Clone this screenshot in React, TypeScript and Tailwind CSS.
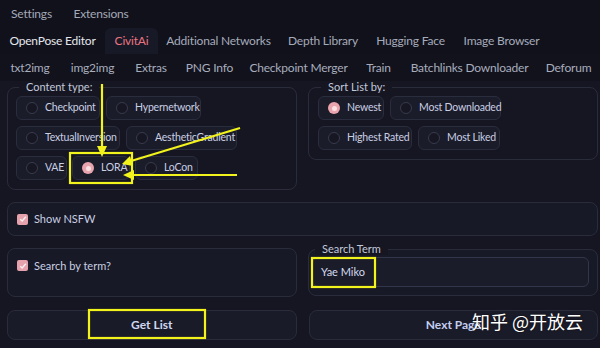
import React from "react";

const topTabs = [
  { label: "Settings", w: "w-[63px]" },
  { label: "Extensions", w: "w-[76px]" },
];

const extTabs = [
  { label: "OpenPose Editor", w: "w-[105px]", cls: "text-[#e4e6ee]" },
  { label: "CivitAi", w: "w-[53px]", cls: "text-[#ea7482] bg-[#181926] rounded-t-md" },
  { label: "Additional Networks", w: "w-[121px]", cls: "text-[#a6abba]" },
  { label: "Depth Library", w: "w-[88px]", cls: "text-[#a6abba]" },
  { label: "Hugging Face", w: "w-[87px]", cls: "text-[#a6abba]" },
  { label: "Image Browser", w: "w-[95px]", cls: "text-[#a6abba]" },
];

const mainTabs = [
  { label: "txt2img", w: "w-[60px]" },
  { label: "img2img", w: "w-[65px]" },
  { label: "Extras", w: "w-[52px]" },
  { label: "PNG Info", w: "w-[65px]" },
  { label: "Checkpoint Merger", w: "w-[113px]" },
  { label: "Train", w: "w-[47px]" },
  { label: "Batchlinks Downloader", w: "w-[135px]" },
  { label: "Deforum", w: "w-[63px]" },
];

const Radio = ({ label, w, on }: { label: string; w: string; on?: boolean }) => (
  <div
    className={`${w} h-[24px] shrink-0 flex items-center gap-[7px] pl-[9px] rounded-md border border-[#2a2d3d] bg-[#1b1c2a] text-[10.5px] tracking-[-0.2px] whitespace-nowrap text-[#c9cfe3]`}
  >
    {on ? (
      <span className="w-[12px] h-[12px] shrink-0 rounded-full bg-[#eaa4ae] flex items-center justify-center">
        <span className="w-[5px] h-[5px] rounded-full bg-[#f9e1e4]" />
      </span>
    ) : (
      <span className="w-[12px] h-[12px] shrink-0 rounded-full border border-[#383b4d] bg-[#161722]" />
    )}
    <span>{label}</span>
  </div>
);

const Check = () => (
  <span className="w-[11px] h-[11px] shrink-0 rounded-[2px] bg-[#e6a2ac] flex items-center justify-center">
    <svg width="8" height="8" viewBox="0 0 8 8">
      <path d="M1.2 4.2 L3.2 6 L6.8 1.8" stroke="#fbeff1" strokeWidth="1.4" fill="none" />
    </svg>
  </span>
);

export default function App() {
  return (
    <div
      className="relative w-[600px] h-[348px] overflow-hidden bg-[#10111a]"
      style={{ fontFamily: "Lato, 'Noto Sans', sans-serif" }}
    >
      {/* tab rows */}
      <div className="flex h-[27px] items-center text-[12px] tracking-[-0.2px] whitespace-nowrap text-[#a4a9b8]">
        {topTabs.map((t) => (
          <div key={t.label} className={`${t.w} shrink-0 flex justify-center`}>
            {t.label}
          </div>
        ))}
      </div>
      <div className="flex h-[27px] items-end text-[12px] tracking-[-0.2px] whitespace-nowrap">
        {extTabs.map((t) => (
          <div key={t.label} className={`${t.w} shrink-0 h-[26px] flex items-center justify-center ${t.cls}`}>
            {t.label}
          </div>
        ))}
      </div>
      <div className="flex h-[27px] items-center text-[12px] tracking-[-0.2px] whitespace-nowrap text-[#a8adbc] bg-[#11121c]">
        {mainTabs.map((t) => (
          <div key={t.label} className={`${t.w} shrink-0 flex justify-center`}>
            {t.label}
          </div>
        ))}
      </div>

      {/* main panel */}
      <div className="bg-[#151622] pl-[7px] pr-[2px] h-[267px]">
        <div className="grid grid-cols-2 gap-[11px] items-start">
          <fieldset className="border border-[#2a2c3b] rounded-lg px-[8px] pb-[9px] pt-[2px]">
            <legend className="ml-[3px] px-[7px] text-[11px] leading-[12px] text-[#c3c8da]">Content type:</legend>
            <div className="flex flex-col gap-[6px] pt-[1px]">
              <div className="flex gap-[6px]">
                <Radio label="Checkpoint" w="w-[84px]" />
                <Radio label="Hypernetwork" w="w-[95px]" />
              </div>
              <div className="flex gap-[6px]">
                <Radio label="TextualInversion" w="w-[104px]" />
                <Radio label="AestheticGradient" w="w-[111px]" />
              </div>
              <div className="flex gap-[5px]">
                <Radio label="VAE" w="w-[51px]" />
                <Radio label="LORA" w="w-[58px]" on />
                <Radio label="LoCon" w="w-[63px]" />
              </div>
            </div>
          </fieldset>
          <fieldset className="border border-[#2a2c3b] rounded-lg px-[9px] pb-[9px] pt-[2px]">
            <legend className="ml-[3px] px-[7px] text-[11px] leading-[12px] text-[#c3c8da]">Sort List by:</legend>
            <div className="flex flex-col gap-[6px] pt-[1px]">
              <div className="flex gap-[6px]">
                <Radio label="Newest" w="w-[66px]" on />
                <Radio label="Most Downloaded" w="w-[111px]" />
              </div>
              <div className="flex gap-[6px]">
                <Radio label="Highest Rated" w="w-[94px]" />
                <Radio label="Most Liked" w="w-[82px]" />
              </div>
            </div>
          </fieldset>
        </div>

        <div className="mt-[12px] h-[34px] flex items-center gap-[6px] pl-[9px] rounded-lg border border-[#2a2c3b] bg-[#181926] text-[11px] text-[#c9cfe3]">
          <Check />
          <span>Show NSFW</span>
        </div>

        <div className="mt-[7px] grid grid-cols-2 gap-[11px] items-start">
          <div className="mt-[5px] h-[49px] flex items-start pt-[11px] gap-[6px] pl-[9px] rounded-lg border border-[#2a2c3b] bg-[#181926] text-[11px] text-[#c9cfe3]">
            <Check />
            <span className="leading-[11px]">Search by term?</span>
          </div>
          <fieldset className="border border-[#2a2c3b] rounded-lg px-[3px] pb-[8px] pt-[2px] bg-[#181926]">
            <legend className="ml-[3px] px-[7px] text-[11px] leading-[12px] text-[#c3c8da] bg-[#151622]">Search Term</legend>
            <div className="h-[30px] rounded-md border border-[#33364a] bg-[#1b1c2a] flex items-center pl-[8px] mr-[5px] text-[11px] text-[#d4daee]">
              Yae Miko
            </div>
          </fieldset>
        </div>

        <div className="mt-[13px] grid grid-cols-2 gap-[12px]">
          <button className="h-[30px] rounded-lg border border-[#2a2c3b] bg-[#1a1b28] text-[12px] font-bold text-[#d0d7ef]">
            Get List
          </button>
          <button className="h-[30px] rounded-lg border border-[#2a2c3b] bg-[#1a1b28] text-[12px] font-bold text-[#c4cdf0]">
            Next Page
          </button>
        </div>
      </div>

      {/* annotation layer */}
      <svg className="absolute inset-0 pointer-events-none" width="600" height="348" viewBox="0 0 600 348">
        <g stroke="#f2f21c" strokeWidth="2.2" fill="none">
          <rect x="70" y="153" width="62" height="30" />
          <rect x="89" y="310" width="116" height="28" />
          <rect x="312" y="258" width="63" height="29" />
          <line x1="102" y1="84" x2="102" y2="147" />
          <line x1="240" y1="128" x2="131" y2="161" />
          <line x1="237" y1="175" x2="132" y2="175" />
        </g>
        <g fill="#f2f21c">
          <polygon points="102,157 97,146 107,146" />
          <polygon points="122,164 133,166 130,156" />
          <polygon points="123,175 134,170 134,180" />
        </g>
      </svg>

      <div
        className="absolute left-[472px] top-[310px] text-[18px] leading-[22px] text-white"
        style={{ fontFamily: "'Noto Sans CJK SC', sans-serif", textShadow: "0 0 2px rgba(0,0,0,0.6)" }}
      >
        知乎 @开放云
      </div>
    </div>
  );
}
